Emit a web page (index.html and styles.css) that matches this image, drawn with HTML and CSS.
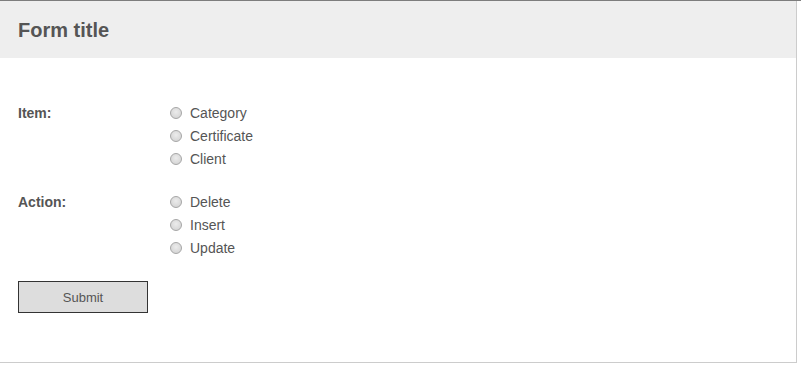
FILE: index.html
```html
<!DOCTYPE html>
<html>
<head>
<meta charset="utf-8">
<link rel="stylesheet" href="styles.css">
</head>
<body>
<div class="form">
  <div class="form-header"><h1 class="form-title">Form title</h1></div>
  <form class="form-body">
    <div class="field">
      <div class="field-label">Item:</div>
      <div class="options">
        <label class="option"><input type="radio" name="item" class="radio"><span>Category</span></label>
        <label class="option"><input type="radio" name="item" class="radio"><span>Certificate</span></label>
        <label class="option"><input type="radio" name="item" class="radio"><span>Client</span></label>
      </div>
    </div>
    <div class="field">
      <div class="field-label">Action:</div>
      <div class="options">
        <label class="option"><input type="radio" name="action" class="radio"><span>Delete</span></label>
        <label class="option"><input type="radio" name="action" class="radio"><span>Insert</span></label>
        <label class="option"><input type="radio" name="action" class="radio"><span>Update</span></label>
      </div>
    </div>
    <button type="button" class="submit">Submit</button>
  </form>
</div>
</body>
</html>
```

FILE: styles.css
```css
html, body {
  margin: 0;
  padding: 0;
  background: #fff;
}
body {
  border-top: 1px solid #7d7d7d;
  font-family: "Liberation Sans", Arial, sans-serif;
  color: #555;
}
.form {
  width: 796px;
  border-right: 1px solid #cccccc;
  border-bottom: 1px solid #cccccc;
  background: #fff;
}
.form-header {
  height: 57px;
  background: #eeeeee;
  display: flex;
  align-items: center;
  padding-left: 18px;
}
.form-title {
  margin: 0;
  padding-top: 1px;
  font-size: 20px;
  font-weight: bold;
  color: #555;
  line-height: 23px;
}
.form-body {
  margin: 0;
  padding: 43px 18px 49px 18px;
  display: flex;
  flex-direction: column;
  align-items: flex-start;
}
.field {
  display: flex;
  margin-bottom: 20px;
}
.field:last-of-type {
  margin-bottom: 22px;
}
.field-label {
  width: 152px;
  padding-top: 1px;
  font-size: 14px;
  font-weight: bold;
  line-height: 23px;
}
.options {
  display: flex;
  flex-direction: column;
}
.option {
  display: flex;
  align-items: center;
  height: 23px;
  font-size: 14px;
}
.radio {
  -webkit-appearance: none;
  appearance: none;
  width: 12px;
  height: 12px;
  margin: 0 8px 0 0;
  border: 1px solid #a6a6a6;
  border-radius: 50%;
  background: radial-gradient(circle at 50% 40%, #ececec 0%, #dcdcdc 55%, #cfcfcf 100%);
  box-sizing: border-box;
}
.submit {
  width: 130px;
  height: 32px;
  margin: 0;
  background: #dddddd;
  border: 1px solid #333;
  border-radius: 0;
  font-family: "Liberation Sans", Arial, sans-serif;
  font-size: 13px;
  color: #555;
  padding: 0;
}
```
